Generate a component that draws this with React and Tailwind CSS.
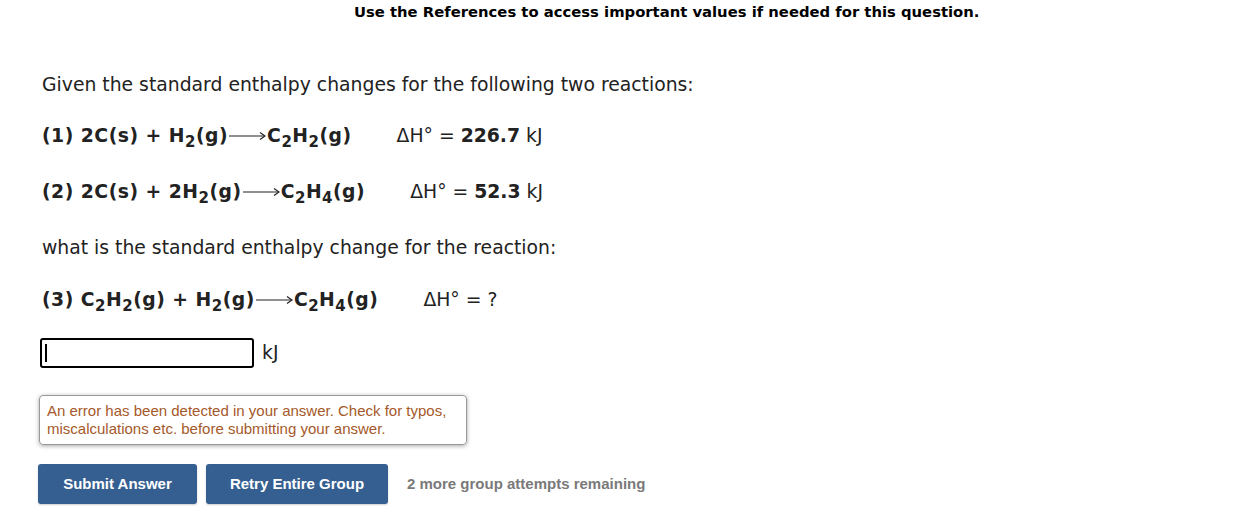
import React from "react";

const font = { fontFamily: '"DejaVu Sans", Verdana, sans-serif' };
const arial = { fontFamily: '"Liberation Sans", Arial, sans-serif' };

function Sub({ children }) {
    return <span className="text-[15px] relative top-[5px]">{children}</span>;
}

// long reaction arrow
function Arrow() {
    return (
        <svg width="37" height="10" viewBox="0 0 37 10" className="inline-block mx-[1px] relative -top-[1px]">
            <line x1="0" y1="5" x2="35" y2="5" stroke="#222" strokeWidth="1.2" />
            <path d="M31 1.5 L36 5 L31 8.5" fill="none" stroke="#222" strokeWidth="1.2" />
        </svg>
    );
}

function Reaction({ children, dh }) {
    return (
        <div className="flex items-baseline text-[18.8px] leading-[28px] text-[#222]">
            <span className="font-bold whitespace-nowrap tracking-[0.5px]">{children}</span>
            <span className="ml-[45px] whitespace-nowrap">{dh}</span>
        </div>
    );
}

export default function App() {
    return (
        <div className="bg-white w-[1241px] h-[523px] overflow-hidden pt-[1px] text-[#222]" style={font}>
            <div className="pl-[354px] text-[14.8px] leading-[22px] font-bold text-black">
                Use the References to access important values if needed for this question.
            </div>

            <div className="pl-[42px]">
                <p className="mt-[48px] text-[18.8px] leading-[28px]">Given the standard enthalpy changes for the following two reactions:</p>

                <div className="mt-[23px]">
                    <Reaction dh={<>ΔH° = <b>226.7</b> kJ</>}>
                        (1) 2C(s) + H<Sub>2</Sub>(g)<Arrow />C<Sub>2</Sub>H<Sub>2</Sub>(g)
                    </Reaction>
                </div>

                <div className="mt-[27px]">
                    <Reaction dh={<>ΔH° = <b>52.3</b> kJ</>}>
                        (2) 2C(s) + 2H<Sub>2</Sub>(g)<Arrow />C<Sub>2</Sub>H<Sub>4</Sub>(g)
                    </Reaction>
                </div>

                <p className="mt-[27px] text-[18.8px] leading-[28px]">what is the standard enthalpy change for the reaction:</p>

                <div className="mt-[24px]">
                    <Reaction dh={<>ΔH° = ?</>}>
                        (3) C<Sub>2</Sub>H<Sub>2</Sub>(g) + H<Sub>2</Sub>(g)<Arrow />C<Sub>2</Sub>H<Sub>4</Sub>(g)
                    </Reaction>
                </div>

                <div className="mt-[23px] flex items-center gap-[8px] -ml-[2px]">
                    <div className="w-[214px] h-[30px] border-[2px] border-black rounded-[3px] flex items-center pl-[3px]">
                        <div className="w-[2px] h-[18px] bg-black" />
                    </div>
                    <span className="text-[18.8px]">kJ</span>
                </div>

                <div className="mt-[27px] -ml-[3px] w-[428px] border border-[#999] rounded-[4px] shadow-[0_1px_4px_rgba(0,0,0,0.35)] px-[7px] py-[6px] text-[15px] leading-[18px] text-[#a5592a]" style={arial}>
                    An error has been detected in your answer. Check for typos, miscalculations etc. before submitting your answer.
                </div>

                <div className="mt-[19px] -ml-[4px] flex items-center gap-[9px]" style={arial}>
                    <button className="w-[159px] h-[40px] bg-[#365f91] rounded-[3px] text-white font-bold text-[15px] shadow-[0_1px_2px_rgba(0,0,0,0.2)]">
                        Submit Answer
                    </button>
                    <button className="w-[182px] h-[40px] bg-[#365f91] rounded-[3px] text-white font-bold text-[15px] shadow-[0_1px_2px_rgba(0,0,0,0.2)]">
                        Retry Entire Group
                    </button>
                    <span className="ml-[10px] text-[15px] font-bold text-[#7a7a7a]">2 more group attempts remaining</span>
                </div>
            </div>
        </div>
    );
}
